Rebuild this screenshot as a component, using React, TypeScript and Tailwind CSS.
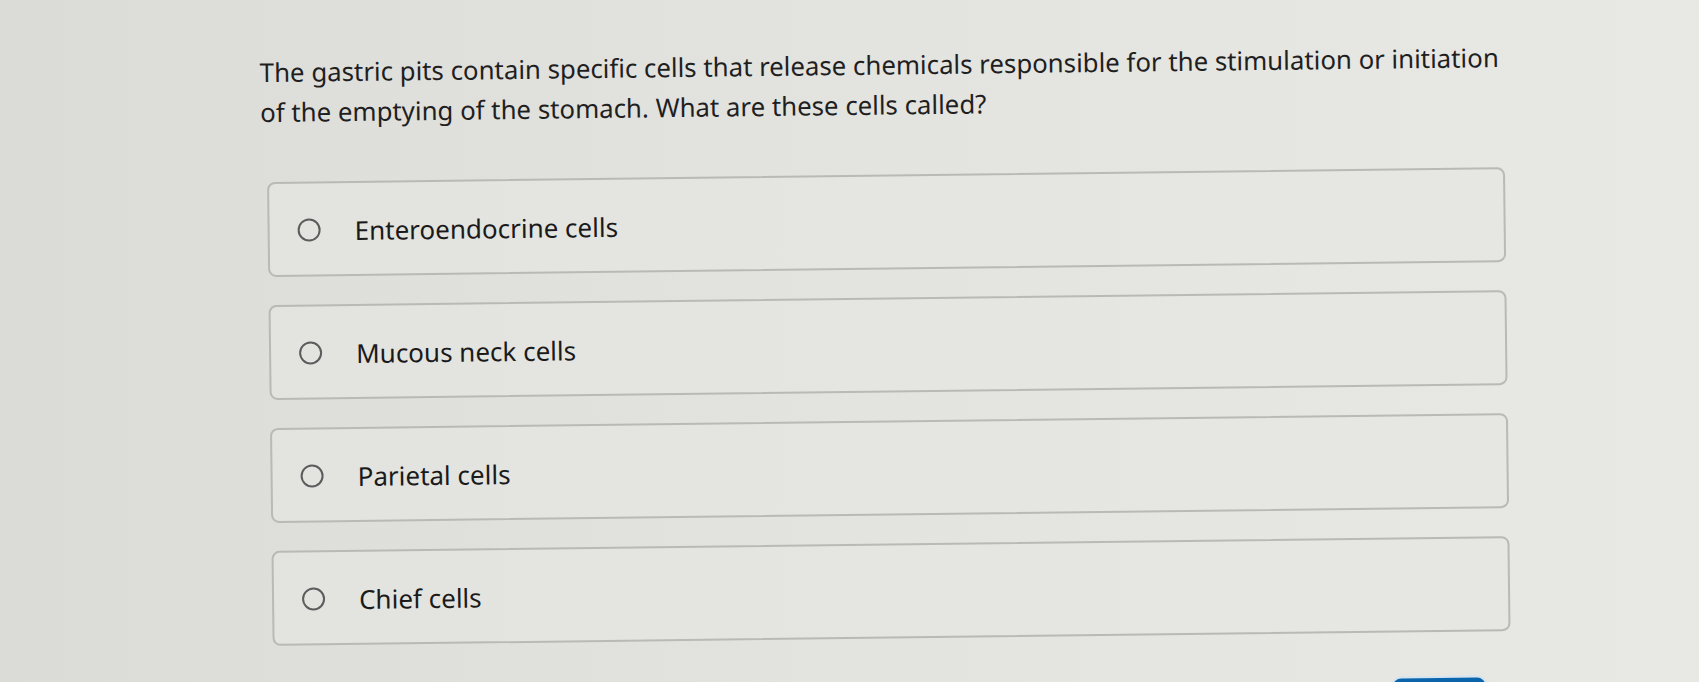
import React from "react";

const options = ["Enteroendocrine cells", "Mucous neck cells", "Parietal cells", "Chief cells"];

export default function App() {
  return (
    <div
      className="relative w-[1699px] h-[682px] overflow-hidden bg-gradient-to-r from-[#dbdbd8] via-[#e3e3e0] to-[#e8e8e5] text-[#1f1f1f]"
      style={{ fontFamily: "'Noto Sans', 'Liberation Sans', Arial, sans-serif" }}
    >
      <div className="w-[1699px] pb-[40px] -rotate-[0.69deg] origin-[849px_341px]">
        <div className="pl-[263px] pt-[45px]">
          <p className="w-[1256px] text-[25.8px] leading-[40px]">
            The gastric pits contain specific cells that release chemicals responsible for the stimulation or initiation of the emptying of the stomach. What are these cells called?
          </p>
        </div>
        <div className="ml-[269px] mt-[50px] w-[1238px] flex flex-col gap-[28px]">
          {options.map((o) => (
            <div
              key={o}
              className="h-[95px] rounded-[8px] border-2 border-[#b9b9b6] bg-[#e6e6e3]/60 flex items-center pt-[2px]"
            >
              <span className="ml-[28px] w-[23px] h-[23px] rounded-full border-[2.5px] border-[#5c5c5c] shrink-0" />
              <span className="ml-[34px] text-[26px] leading-[30px] text-[#1a1a1a]">{o}</span>
            </div>
          ))}
        </div>
        <div className="ml-[1387px] mt-[44px] w-[96px] h-[40px] rounded-[10px] bg-[#0b65ad] border-2 border-[#d4e4f0]" />
      </div>
    </div>
  );
}
